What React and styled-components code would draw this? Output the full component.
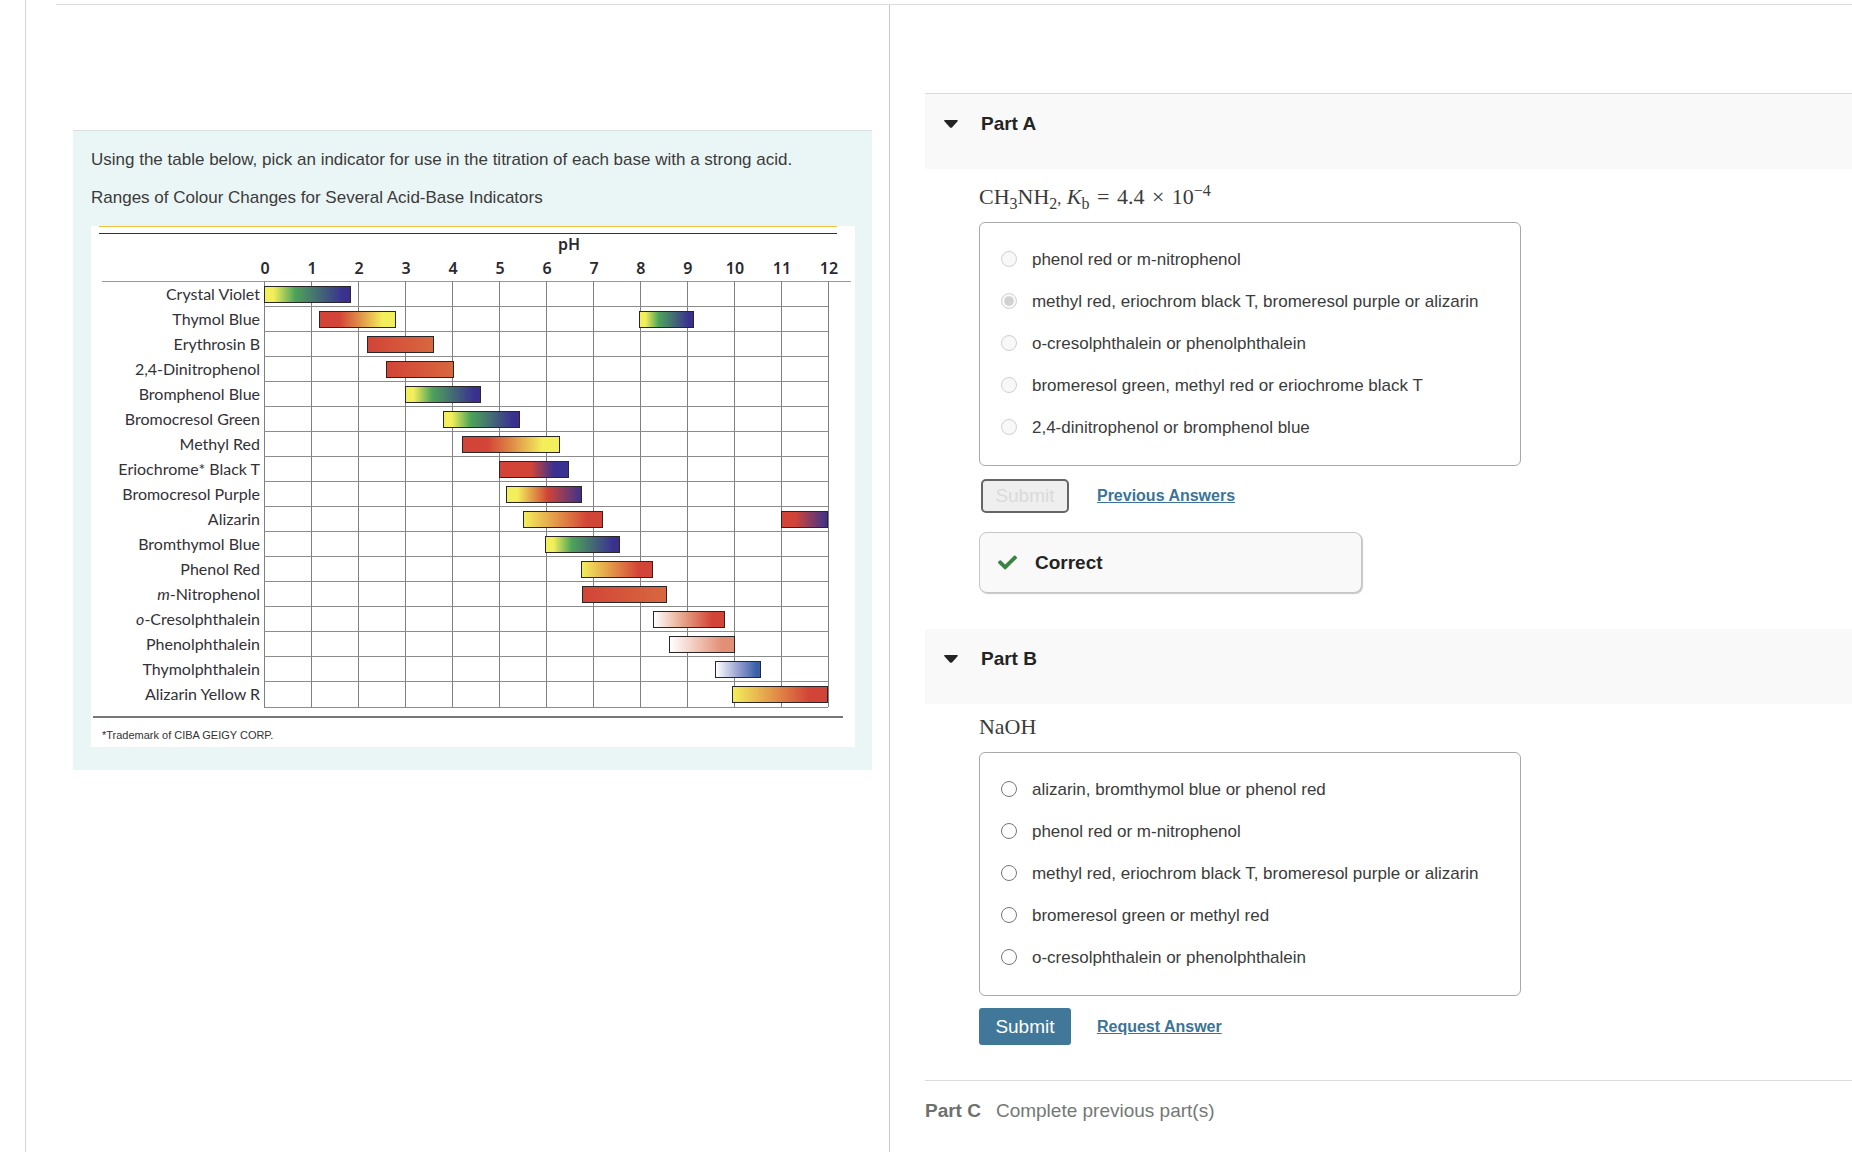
import React from 'react'
import styled, { createGlobalStyle } from 'styled-components'
import { FaCheck } from 'react-icons/fa'

const PARTS = {
  a: [
    'phenol red or m-nitrophenol',
    'methyl red, eriochrom black T, bromeresol purple or alizarin',
    'o-cresolphthalein or phenolphthalein',
    'bromeresol green, methyl red or eriochrome black T',
    '2,4-dinitrophenol or bromphenol blue',
  ],
  b: [
    'alizarin, bromthymol blue or phenol red',
    'phenol red or m-nitrophenol',
    'methyl red, eriochrom black T, bromeresol purple or alizarin',
    'bromeresol green or methyl red',
    'o-cresolphthalein or phenolphthalein',
  ],
}

const GRADIENTS = {
  yellowBlue: [[0, '#f3ee5b'], [10, '#f3ee5b'], [35, '#4ca35a'], [90, '#3a3290'], [100, '#3a2f8a']],
  redYellow: [[0, '#d24437'], [25, '#d24437'], [50, '#de8a46'], [82, '#f3ee5b'], [100, '#f3ee5b']],
  red: [[0, '#d24437'], [100, '#d8683f']],
  redBlue: [[0, '#d24437'], [45, '#d24437'], [78, '#3a3290'], [100, '#3a3290']],
  redViolet: [[0, '#d24437'], [28, '#d24437'], [100, '#3a3290']],
  yellowRedBlue: [[0, '#f3ee5b'], [14, '#f3ee5b'], [54, '#d24437'], [100, '#3a3290']],
  yellowRed: [[0, '#f3ee5b'], [80, '#d24437'], [100, '#d24437']],
  whiteRed: [[0, '#ffffff'], [40, '#e6a68b'], [82, '#d24437'], [100, '#d24437']],
  whitePink: [[0, '#ffffff'], [80, '#e28f76'], [100, '#e28f76']],
  whiteBlue: [[0, '#ffffff'], [45, '#a0a8d4'], [90, '#3a60a8'], [100, '#3a60a8']],
}

// bars are [start, end, gradient] in chart units
const INDICATORS = [
  { name: 'Crystal Violet', bars: [[174, 260, 'yellowBlue']] },
  { name: 'Thymol Blue', bars: [[229, 305, 'redYellow'], [549, 603, 'yellowBlue']] },
  { name: 'Erythrosin B', bars: [[277, 343, 'red']] },
  { name: '2,4-Dinitrophenol', bars: [[296, 363, 'red']] },
  { name: 'Bromphenol Blue', bars: [[315, 390, 'yellowBlue']] },
  { name: 'Bromocresol Green', bars: [[353, 429, 'yellowBlue']] },
  { name: 'Methyl Red', bars: [[372, 469, 'redYellow']] },
  { name: 'Eriochrome* Black T', bars: [[409, 478, 'redBlue']] },
  { name: 'Bromocresol Purple', bars: [[416, 491, 'yellowRedBlue']] },
  { name: 'Alizarin', bars: [[433, 512, 'yellowRed'], [691, 737, 'redViolet']] },
  { name: 'Bromthymol Blue', bars: [[455, 529, 'yellowBlue']] },
  { name: 'Phenol Red', bars: [[491, 562, 'yellowRed']] },
  { prefix: 'm', name: '-Nitrophenol', bars: [[492, 576, 'red']] },
  { prefix: 'o', name: '-Cresolphthalein', bars: [[563, 634, 'whiteRed']] },
  { name: 'Phenolphthalein', bars: [[579, 644, 'whitePink']] },
  { name: 'Thymolphthalein', bars: [[625, 670, 'whiteBlue']] },
  { name: 'Alizarin Yellow R', bars: [[642, 737, 'yellowRed']] },
]

const GRID_LEFT = 174
const GRID_TOP = 55
const GRID_RIGHT = 738
const GRID_BOTTOM = 481

const rowY = (i) => Math.floor(GRID_TOP + (i * (GRID_BOTTOM - GRID_TOP)) / INDICATORS.length)
const columnX = (i) => GRID_LEFT + i * 47

function IndicatorChart() {
  return (
    <Chart viewBox="0 0 764 521" role="img" aria-label="Indicator colour ranges by pH">
      <defs>
        {Object.entries(GRADIENTS).map(([id, stops]) => (
          <linearGradient key={id} id={id}>
            {stops.map(([offset, color]) => (
              <stop key={offset} offset={`${offset}%`} stopColor={color} />
            ))}
          </linearGradient>
        ))}
      </defs>
      <rect x="8" y="0" width="738" height="1" fill="#f0c23c" />
      <rect x="8" y="7" width="738" height="1" fill="#333333" />
      <rect x="11" y={GRID_TOP} width="749" height="1" fill="#999999" />
      <AxisText x="478" y="24">pH</AxisText>

      {Array.from({ length: 13 }, (_, i) => (
        <g key={i}>
          <AxisText x={columnX(i)} y="48">{i}</AxisText>
          <rect x={columnX(i) - 1} y={GRID_TOP} width="1" height={GRID_BOTTOM - GRID_TOP} fill="#808080" />
        </g>
      ))}

      {INDICATORS.map(({ prefix, name }, i) => (
        <g key={name}>
          <rect x={GRID_LEFT - 1} y={rowY(i + 1)} width={GRID_RIGHT - GRID_LEFT} height="1" fill="#8c8c8c" />
          <RowText x="169" y={rowY(i) + 19}>
            {prefix && <tspan fontStyle="italic">{prefix}</tspan>}
            {name}
          </RowText>
        </g>
      ))}

      {INDICATORS.map(({ bars }, i) =>
        bars.map(([start, end, gradient]) => (
          <rect
            key={start}
            x={start}
            y={rowY(i) + 6}
            width={end - start}
            height="16"
            fill={`url(#${gradient})`}
            stroke="#2b2628"
          />
        ))
      )}

      <rect x="2" y="490" width="750" height="2" fill="#777777" />
      <NoteText x="11" y="513">*Trademark of CIBA GEIGY CORP.</NoteText>
    </Chart>
  )
}

function PartHeader({ title, first }) {
  return (
    <PartBar $first={first}>
      <PartToggle type="button" aria-expanded="true">
        <Caret viewBox="0 0 14 8" aria-hidden="true">
          <path d="M1 0h12c.9 0 1.2.7.6 1.3L8 7.4c-.6.6-1.4.6-2 0L.4 1.3C-.2.7.1 0 1 0z" />
        </Caret>
        {title}
      </PartToggle>
    </PartBar>
  )
}

function Options({ name, items, selected, disabled }) {
  return (
    <OptionBox>
      {items.map((item, i) => (
        <Option key={item}>
          <Radio type="radio" name={name} defaultChecked={i === selected} disabled={disabled} />
          {item}
        </Option>
      ))}
    </OptionBox>
  )
}

export default function App() {
  return (
    <>
      <GlobalStyle />
      <Page>
        <LeftPane>
          <LeftContent>
            <Problem>
              <Paragraph>
                Using the table below, pick an indicator for use in the titration of each base with a strong acid.
              </Paragraph>
              <Paragraph>Ranges of Colour Changes for Several Acid-Base Indicators</Paragraph>
              <IndicatorChart />
            </Problem>
          </LeftContent>
        </LeftPane>

        <RightPane>
          <RightContent>
            <PartHeader title="Part A" first />
            <PartBody>
              <Formula $height={53}>
                CH<sub>3</sub>NH<sub>2</sub><small>,</small>{' '}
                <i>K</i><sub>b</sub> <Operator>=</Operator> 4.4 <Operator>×</Operator> 10<sup>−4</sup>
              </Formula>
              <Options name="part-a" items={PARTS.a} selected={1} disabled />
              <Actions>
                <DisabledSubmit type="button" disabled>Submit</DisabledSubmit>
                <ActionLink href="#previous">Previous Answers</ActionLink>
              </Actions>
              <Feedback>
                <FaCheck size={19} color="#3a8340" aria-hidden="true" />
                Correct
              </Feedback>
            </PartBody>

            <PartHeader title="Part B" />
            <PartBody>
              <Formula $height={48}>NaOH</Formula>
              <Options name="part-b" items={PARTS.b} />
              <Actions>
                <Submit type="button">Submit</Submit>
                <ActionLink href="#request">Request Answer</ActionLink>
              </Actions>
            </PartBody>

            <LockedPart>
              <strong>Part C</strong>
              <span>Complete previous part(s)</span>
            </LockedPart>
          </RightContent>
        </RightPane>
      </Page>
    </>
  )
}

const GlobalStyle = createGlobalStyle`
  * {
    box-sizing: border-box;
  }

  body {
    margin: 0;
    background: #ffffff;
    color: #3b3b3b;
    font-family: "Liberation Sans", Arial, sans-serif;
    font-size: 17px;
  }
`

const Page = styled.div`
  display: grid;
  grid-template-columns: 48% 1fr;
  min-height: 100vh;
`

const LeftPane = styled.section`
  margin-left: 25px;
  padding: 4px 0 0 30px;
  border-left: 1px solid #d6d6d6;
`

const LeftContent = styled.div`
  padding: 125px 17px 0;
  border-top: 1px solid #dcdcdc;
`

const Problem = styled.div`
  padding: 17px 17px 23px 18px;
  border-top: 1px solid #dcdfdf;
  background: #eaf6f6;
`

const Paragraph = styled.p`
  margin: 0 0 14px;
  line-height: 24px;
`

const Chart = styled.svg`
  display: block;
  width: 100%;
  margin-top: 16px;
  background: #ffffff;
  shape-rendering: crispEdges;
`

const RowText = styled.text`
  fill: #333038;
  font-family: Lato, "Noto Sans", sans-serif;
  font-size: 16px;
  text-anchor: end;
`

const AxisText = styled.text`
  fill: #2b2830;
  font-family: "Noto Sans", sans-serif;
  font-size: 16px;
  font-weight: 600;
  text-anchor: middle;
`

const NoteText = styled.text`
  fill: #333333;
  font-family: "Liberation Sans", Arial, sans-serif;
  font-size: 11px;
`

const RightPane = styled.section`
  display: flex;
  margin-top: 4px;
  border-top: 1px solid #dcdcdc;
`

const RightContent = styled.div`
  flex: 1;
  padding: 88px 0 0 35px;
  border-left: 1px solid #c3c9d4;
`

const PartBar = styled.header`
  height: ${(props) => (props.$first ? '76px' : '75px')};
  padding: 18px 19px;
  border-top: ${(props) => (props.$first ? '1px solid #dcdcdc' : 'none')};
  background: #f9f9f9;
`

const PartToggle = styled.button`
  display: flex;
  align-items: center;
  gap: 23px;
  padding: 0;
  border: none;
  background: none;
  color: #242424;
  font-family: inherit;
  font-size: 19px;
  font-weight: bold;
  line-height: 24px;
`

const Caret = styled.svg`
  width: 14px;
  height: 8px;
  fill: #242424;
`

const PartBody = styled.div`
  padding-left: 54px;
`

const Formula = styled.div`
  height: ${(props) => props.$height}px;
  padding-top: ${(props) => props.$height - 39}px;
  font-family: "Liberation Serif", serif;
  font-size: 22px;
  line-height: 28px;

  sub,
  sup,
  small {
    font-size: 16px;
    line-height: 0;
  }
`

const Operator = styled.span`
  margin: 0 2px;
`

const OptionBox = styled.div`
  max-width: 542px;
  padding: 16px 21px;
  border: 1px solid #a9a9a9;
  border-radius: 6px;
`

const Option = styled.label`
  display: flex;
  align-items: center;
  gap: 15px;
  height: 42px;
`

const Radio = styled.input`
  width: 16px;
  height: 16px;
  margin: 0 0 2px;
`

const Actions = styled.div`
  display: flex;
  align-items: center;
  gap: 26px;
  margin-top: 12px;
`

const Submit = styled.button`
  width: 92px;
  height: 37px;
  padding: 0;
  border: none;
  border-radius: 3px;
  background: #417899;
  color: #ffffff;
  font-family: inherit;
  font-size: 19px;
`

const DisabledSubmit = styled(Submit)`
  width: 88px;
  height: 34px;
  margin: 1px 2px;
  border: 2px solid #666666;
  border-radius: 5px;
  background: #efefef;
  color: #dadada;
`

const ActionLink = styled.a`
  color: #3b7496;
  font-size: 16px;
  font-weight: bold;
`

const Feedback = styled.div`
  display: flex;
  align-items: center;
  gap: 18px;
  max-width: 383px;
  height: 61px;
  margin: 18px 0 36px;
  padding-left: 18px;
  border: 1px solid #c6c6c6;
  border-radius: 8px;
  background: #f9f9f9;
  box-shadow: 1px 1px 1px #c6c6c6;
  color: #242424;
  font-size: 19px;
  font-weight: bold;
`

const LockedPart = styled.div`
  display: flex;
  gap: 15px;
  margin-top: 35px;
  padding-top: 18px;
  border-top: 1px solid #dcdcdc;
  color: #747876;
  font-size: 19px;
  line-height: 24px;

  strong {
    color: #6c706e;
  }
`
